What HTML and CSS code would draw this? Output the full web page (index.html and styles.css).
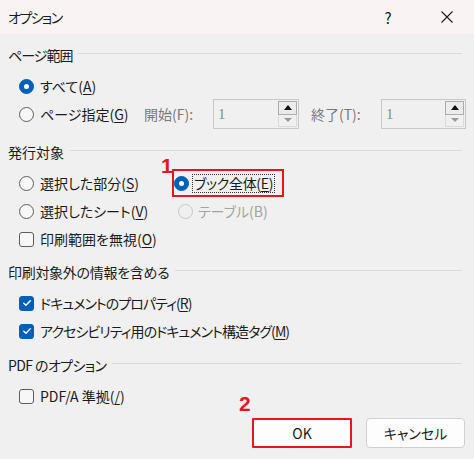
FILE: index.html
```html
<!DOCTYPE html>
<html lang="ja">
<head>
<meta charset="utf-8">
<title>オプション</title>
<link rel="stylesheet" href="styles.css">
</head>
<body>
<div class="dialog">
  <div class="titlebar">
    <span class="title">オプション</span>
    <span class="help">?</span>
    <span class="close"><svg width="12" height="12" viewBox="0 0 12 12"><path d="M0.5 0.5 L11.5 11.5 M11.5 0.5 L0.5 11.5" stroke="#1b1b1b" stroke-width="1.1" fill="none"/></svg></span>
  </div>
  <div class="content">
    <section class="group g1">
      <div class="legend"><span class="t1">ページ範囲</span><i class="rule"></i></div>
      <div class="row"><span class="radio on"></span><span>すべて(<u>A</u>)</span></div>
      <div class="row spec">
        <div class="pagespec"><span class="radio"></span><span>ページ指定(<u>G</u>)</span></div>
        <span class="lbl lbl1">開始(F):</span>
        <div class="spin s1"><span class="val">1</span><span class="btns"><span class="up"></span><span class="dn"></span></span></div>
        <span class="lbl lbl2">終了(T):</span>
        <div class="spin s2"><span class="val">1</span><span class="btns"><span class="up"></span><span class="dn"></span></span></div>
      </div>
    </section>
    <section class="group g2">
      <div class="legend"><span>発行対象</span><i class="rule"></i></div>
      <div class="grid">
        <div class="row"><span class="radio"></span><span>選択した部分(<u>S</u>)</span></div>
        <div class="row c2 hl">
          <b class="badge b1">1</b>
          <span class="radio on"></span><span class="focus">ブック全体(<u>E</u>)</span>
        </div>
        <div class="row"><span class="radio"></span><span>選択したシート(<u>V</u>)</span></div>
        <div class="row c2 disabled"><span class="radio"></span><span>テーブル(B)</span></div>
        <div class="row"><span class="check"></span><span>印刷範囲を無視(<u>O</u>)</span></div>
      </div>
    </section>
    <section class="group g3">
      <div class="legend"><span class="t3">印刷対象外の情報を含める</span><i class="rule"></i></div>
      <div class="row"><span class="check on"><svg width="10" height="10" viewBox="0 0 10 10"><path d="M1.8 5.2 L4 7.3 L8.3 2.8" stroke="#fff" stroke-width="1.4" fill="none" stroke-linecap="round" stroke-linejoin="round"/></svg></span><span class="tight">ドキュメントのプロパティ(<u>R</u>)</span></div>
      <div class="row"><span class="check on"><svg width="10" height="10" viewBox="0 0 10 10"><path d="M1.8 5.2 L4 7.3 L8.3 2.8" stroke="#fff" stroke-width="1.4" fill="none" stroke-linecap="round" stroke-linejoin="round"/></svg></span><span class="tight">アクセシビリティ用のドキュメント構造タグ(<u>M</u>)</span></div>
    </section>
    <section class="group g4">
      <div class="legend"><span class="t4">PDF のオプション</span><i class="rule"></i></div>
      <div class="row"><span class="check"></span><span>PDF/A 準拠(<u>/</u>)</span></div>
    </section>
  </div>
  <div class="buttons">
    <b class="badge b2">2</b>
    <button class="btn ok">OK</button>
    <button class="btn">キャンセル</button>
  </div>
</div>
</body>
</html>
```
FILE: styles.css
```css
* { box-sizing: border-box; margin: 0; padding: 0; }
body {
  margin: 0;
  width: 474px;
  height: 459px;
  overflow: hidden;
  background: #f0f0f0;
  font-family: "Noto Sans CJK JP", "Noto Sans", sans-serif;
  font-size: 14px;
  color: #1b1b1b;
  font-feature-settings: "palt";
}
u { text-decoration: underline; text-underline-offset: 2px; text-decoration-thickness: 1px; }
.dialog { width: 474px; height: 459px; display: flex; flex-direction: column; background: #f0f0f0; }
.titlebar {
  height: 34px;
  display: flex;
  align-items: center;
  background: #f9f3f4;
  padding-left: 8px;
}
.title { flex: 1; font-size: 14px; letter-spacing: -1.6px; }
.help { width: 16px; text-align: center; font-size: 15px; margin-right: 45px; color: #1b1b1b; }
.close { width: 12px; height: 12px; display: flex; margin-right: 21px; }

.content { padding: 10px 0 0 8px; }
.legend { height: 22px; display: flex; align-items: center; gap: 6px; padding-right: 12px; margin-bottom: 6px; }
.t1 { letter-spacing: -1px; }
.t3 { letter-spacing: -0.3px; }
.t4 { letter-spacing: -0.6px; }
.rule { flex: 1; height: 1px; background: #dadada; margin-top: -3px; }
.row { height: 28px; display: flex; align-items: center; padding-left: 11px; gap: 6px; }
.row.spec { gap: 0; }
.g2 { margin-top: 13px; }
.g3 { margin-top: 8px; }
.g4 { margin-top: 9px; }

.radio {
  width: 15px; height: 15px; border-radius: 50%;
  border: 1px solid #5d5d5d; background: #f7f7f7; flex: none;
}
.radio.on { background: #005fb8; border-color: #005fb8; position: relative; }
.radio.on::after {
  content: ""; position: absolute; left: 4px; top: 4px; width: 5px; height: 5px;
  border-radius: 50%; background: #fff;
}
.check {
  width: 15px; height: 15px; border-radius: 3px; border: 1px solid #5d5d5d;
  background: #f7f7f7; flex: none; display: flex; align-items: center; justify-content: center;
}
.check.on { background: #005fb8; border-color: #005fb8; }
.tight { letter-spacing: -0.95px; }

.pagespec { display: flex; align-items: center; gap: 6px; width: 125px; }
.lbl { color: #7a7a7a; }
.lbl1 { width: 69px; }
.lbl2 { width: 70px; margin-left: 12px; }
.spin {
  height: 30px; border: 1px solid #c8c8c8; display: flex; align-items: stretch;
  justify-content: space-between; padding: 1px 1px 1px 4px; color: #8a8a8a;
}
.s1 { width: 86px; }
.s2 { width: 85px; }
.val { font-family: "Liberation Serif", serif; font-size: 15px; line-height: 26px; }
.btns { width: 19px; display: flex; flex-direction: column; }
.up, .dn { flex: 1; display: flex; align-items: center; justify-content: center; }
.up { border: 1px solid #adadad; background: #ececec; }
.dn { border: 1px solid #dadada; border-top: none; background: #f0f0f0; }
.up::before { content: ""; border-left: 4px solid transparent; border-right: 4px solid transparent; border-bottom: 5px solid #111; }
.dn::before { content: ""; border-left: 4px solid transparent; border-right: 4px solid transparent; border-top: 4px solid #9a9a9a; }

.grid { display: grid; grid-template-columns: 170px 1fr; }
.grid .row { position: relative; }
.grid .row.c2 { padding-left: 0; }
.row.hl {
  width: 112px; margin-left: -6px; border: 2px solid #e5161d; padding-left: 4px; gap: 4px;
}
.row.hl .focus { outline: 1px dotted #333; padding: 0 1px; line-height: 17px; letter-spacing: -0.3px; }
.disabled { color: #a3a3a3; gap: 5px; }
.disabled .radio { border-color: #c8c8c8; background: #f0f0f0; }

.badge {
  position: absolute; color: #e5161d; font-family: "Liberation Sans", Arial, sans-serif;
  font-weight: bold; font-size: 21px; line-height: 1;
}
.b1 { left: -13px; top: -16px; }
.buttons {
  position: relative; margin-top: 8px; display: flex; justify-content: flex-end;
  gap: 14px; padding-right: 9px;
}
.b2 { left: 239px; top: -25px; }
.btn {
  width: 99px; height: 30px; background: #fdfdfd; border: 1px solid #d0d0d0;
  border-radius: 4px; font-family: "Noto Sans CJK JP", "Noto Sans", sans-serif;
  font-size: 14px; color: #1b1b1b; font-feature-settings: "palt";
}
.btn.ok { width: 100px; border: 2px solid #e5161d; border-radius: 1px; }
```
